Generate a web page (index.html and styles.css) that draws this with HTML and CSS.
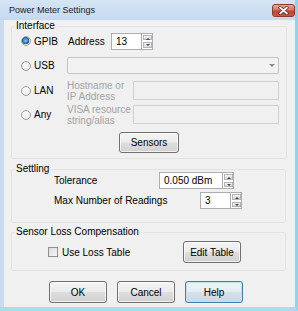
FILE: index.html
```html
<!DOCTYPE html>
<html lang="en">
<head>
    <meta charset="UTF-8">
    <title>Power Meter Settings</title>
    <link rel="stylesheet" href="styles.css">
</head>
<body>

<div class="window">
    <div class="titlebar">
        <span class="title">Power Meter Settings</span>
        <span class="close-btn">
            <svg width="11" height="9" viewBox="0 0 11 9">
                <path d="M2 1.5 L9 7.5 M9 1.5 L2 7.5" stroke="#5a1d16" stroke-width="3.2" stroke-linecap="round"/>
                <path d="M2 1.5 L9 7.5 M9 1.5 L2 7.5" stroke="#fff" stroke-width="1.8" stroke-linecap="round"/>
            </svg>
        </span>
    </div>

    <div class="frame">
        <div class="client">

            <fieldset class="group group-interface">
                <legend>Interface</legend>

                <div class="if-row row-gpib">
                    <label class="choice"><span class="radio checked"></span>GPIB</label>
                    <span class="caption">Address</span>
                    <span class="numbox num-address"><span class="value">13</span></span>
                    <span class="spin"><span class="up"></span><span class="down"></span></span>
                </div>

                <div class="if-row row-usb">
                    <label class="choice"><span class="radio"></span>USB</label>
                    <span class="combo"><span class="combo-arrow"></span></span>
                </div>

                <div class="if-row row-lan">
                    <label class="choice"><span class="radio"></span>LAN</label>
                    <span class="hint">Hostname or<br>IP Address</span>
                    <span class="textbox"></span>
                </div>

                <div class="if-row row-any">
                    <label class="choice"><span class="radio"></span>Any</label>
                    <span class="hint">VISA resource<br>string/alias</span>
                    <span class="textbox"></span>
                </div>

                <div class="center-row">
                    <button class="btn btn-sensors">Sensors</button>
                </div>
            </fieldset>

            <fieldset class="group group-settling">
                <legend>Settling</legend>

                <div class="set-row row-tolerance">
                    <span class="set-label label-tolerance">Tolerance</span>
                    <span class="numbox num-tolerance"><span class="value">0.050 dBm</span></span>
                    <span class="spin"><span class="up"></span><span class="down"></span></span>
                </div>

                <div class="set-row row-readings">
                    <span class="set-label label-readings">Max Number of Readings</span>
                    <span class="numbox num-readings"><span class="value">3</span></span>
                    <span class="spin"><span class="up"></span><span class="down"></span></span>
                </div>
            </fieldset>

            <fieldset class="group group-loss">
                <legend>Sensor Loss Compensation</legend>

                <div class="loss-row">
                    <label class="check-label"><span class="checkbox"></span>Use Loss Table</label>
                    <button class="btn btn-edit">Edit Table</button>
                </div>
            </fieldset>

            <div class="actions">
                <button class="btn">OK</button>
                <button class="btn">Cancel</button>
                <button class="btn btn-default">Help</button>
            </div>

        </div>
    </div>
</div>

</body>
</html>
```

FILE: styles.css
```css
html, body {
    margin: 0;
    padding: 0;
    background-color: #ffffff;
}
body {
    font-family: "Liberation Sans", Arial, sans-serif;
    font-size: 10px;
    color: #000;
}
.window {
    width: 295px;
    height: 307px;
    border-right: 3px solid #8ad6ef;
    border-bottom: 4px solid #a3def2;
    background-color: #c8dcf1;
    display: flex;
    flex-direction: column;
}
.titlebar {
    height: 20px;
    display: flex;
    align-items: flex-start;
    justify-content: space-between;
    background: linear-gradient(to bottom, #d6e5f5, #c5d9ef);
}
.title {
    font-size: 9px;
    line-height: 11px;
    padding: 5px 0 0 9px;
    color: #1b1b1b;
}
.close-btn {
    width: 21px;
    height: 11px;
    margin-top: 4px;
    border: 1px solid #8c3a2e;
    border-radius: 3px;
    background: linear-gradient(to bottom, #e8a99b 0%, #d47465 45%, #c2412f 55%, #c9593f 100%);
    display: flex;
    align-items: center;
    justify-content: center;
}
.frame {
    flex: 1;
    padding-left: 4px;
    display: flex;
}
.client {
    flex: 1;
    background-color: #f0f0f0;
    padding: 0 0 0 7px;
}

/* group boxes */
.group {
    width: 275px;
    margin: 0;
    padding: 0 7px 0 0;
    border: 1px solid #e3e3e3;
    border-radius: 2px;
    box-sizing: border-box;
}
.group legend {
    margin-left: 2px;
    padding: 0 2px;
    line-height: 12px;
}
.group-interface {
    padding-bottom: 5px;
}
.group-settling {
    margin-top: 4px;
    padding-bottom: 13px;
}
.group-loss {
    margin-top: 3px;
    padding-bottom: 7px;
}

/* interface rows */
.if-row {
    display: flex;
    align-items: center;
}
.row-gpib {
    height: 18px;
}
.row-usb {
    height: 17px;
    margin-top: 7px;
}
.row-lan {
    height: 19px;
    margin-top: 7px;
}
.row-any {
    height: 19px;
    margin-top: 5px;
}
.choice {
    width: 55px;
    flex-shrink: 0;
    display: flex;
    align-items: center;
}
.radio {
    width: 8px;
    height: 8px;
    margin-left: 9px;
    margin-right: 3px;
    border: 1px solid #a0a0a0;
    border-radius: 50%;
    background: radial-gradient(circle at 40% 40%, #ffffff, #e0e0e0);
}
.radio.checked {
    background: radial-gradient(circle at 45% 45%, #8fc6f2 0%, #2a6fb8 45%, #1d4e8f 55%, #e6e6e6 62%, #f5f5f5 100%);
}
.caption {
    width: 43px;
    padding-left: 1px;
}
.numbox {
    height: 15px;
    border: 1px solid #abadb3;
    border-right: none;
    background-color: #fff;
    display: flex;
    align-items: center;
    box-sizing: content-box;
}
.numbox .value {
    padding-left: 4px;
}
.num-address {
    width: 29px;
}
.spin {
    width: 9px;
    height: 15px;
    border: 1px solid #abadb3;
    background-color: #fff;
    padding: 0 0 0 1px;
    display: flex;
    flex-direction: column;
    box-sizing: content-box;
}
.spin .up, .spin .down {
    flex: 1;
    margin: 1px 0;
    border: 1px solid #b5b5b5;
    background: linear-gradient(to bottom, #f3f3f3, #dcdcdc);
    position: relative;
}
.spin .up::after, .spin .down::after {
    content: "";
    position: absolute;
    left: 2px;
    top: 2px;
    border-left: 2px solid transparent;
    border-right: 2px solid transparent;
}
.spin .up::after {
    border-bottom: 2px solid #444;
}
.spin .down::after {
    top: 1px;
    border-top: 2px solid #444;
}
.combo {
    width: 210px;
    height: 15px;
    border: 1px solid #c3c3c3;
    border-radius: 2px;
    background-color: #f2f2f2;
    display: flex;
    align-items: center;
    justify-content: flex-end;
    box-sizing: content-box;
}
.combo-arrow {
    margin-right: 3px;
    border-left: 3px solid transparent;
    border-right: 3px solid transparent;
    border-top: 3px solid #8a8a8a;
}
.hint {
    width: 66px;
    line-height: 11px;
    color: #a3a3a3;
    white-space: nowrap;
}
.textbox {
    width: 144px;
    height: 17px;
    border: 1px solid #d0d0d0;
    background-color: #f0f0f0;
    box-sizing: content-box;
}
.center-row {
    display: flex;
    justify-content: center;
    margin-top: 8px;
    padding-left: 7px;
}

/* buttons */
.btn {
    font-family: "Liberation Sans", Arial, sans-serif;
    font-size: 10px;
    color: #000;
    width: 58px;
    height: 22px;
    padding: 0;
    border: 1px solid #707070;
    border-radius: 3px;
    background: linear-gradient(to bottom, #f4f4f4 0%, #ececec 48%, #dedede 52%, #d0d0d0 100%);
    box-shadow: inset 0 0 0 1px rgba(255,255,255,0.7);
}
.btn-sensors {
    width: 60px;
    height: 21px;
}
.btn-default {
    border-color: #3c7fb1;
    background: linear-gradient(to bottom, #eef4f9 0%, #e4ecf2 48%, #d6e0e8 52%, #ccd7e0 100%);
    box-shadow: inset 0 0 0 1px #bfe2f8;
}

/* settling */
.set-row {
    display: flex;
    align-items: center;
    height: 17px;
}
.row-tolerance {
    margin-top: -3px;
}
.row-readings {
    margin-top: 3px;
}
.set-label {
    padding-left: 42px;
}
.label-tolerance {
    width: 105px;
}
.label-readings {
    width: 146px;
}
.num-tolerance {
    width: 62px;
}
.num-readings {
    width: 29px;
}

/* sensor loss */
.loss-row {
    display: flex;
    align-items: center;
    justify-content: space-between;
    margin-top: 3px;
    height: 22px;
    padding-right: 37px;
}
.check-label {
    display: flex;
    align-items: center;
    padding-left: 36px;
}
.checkbox {
    width: 8px;
    height: 8px;
    margin-right: 4px;
    border: 1px solid #8e8f8f;
    background: linear-gradient(135deg, #dcdcdc, #f6f6f6);
}

/* dialog buttons */
.actions {
    display: flex;
    gap: 10px;
    margin-top: 10px;
    padding-left: 38px;
}
```
